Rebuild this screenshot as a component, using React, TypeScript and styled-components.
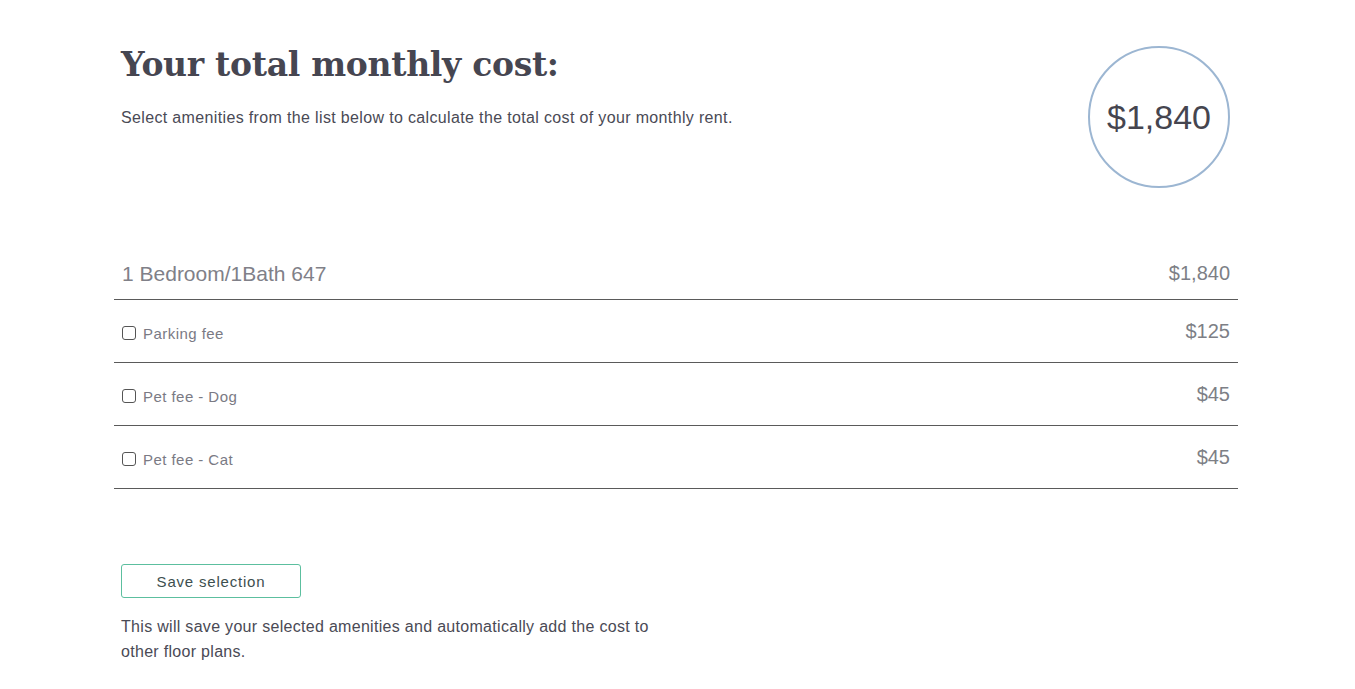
import * as React from "react";
import { FC, useState } from "react";
import styled, { createGlobalStyle } from "styled-components";

const GlobalStyle = createGlobalStyle`
  html, body {
    margin: 0;
    padding: 0;
    background: #fff;
  }
  body {
    font-family: "Liberation Sans", Arial, sans-serif;
  }
`;

const Container = styled.div`
  width: 1124px;
  margin: 0 0 0 114px;
  padding: 45px 0 30px 0;
  box-sizing: border-box;
`;

const Header = styled.div`
  display: flex;
  justify-content: space-between;
  align-items: flex-start;
  padding: 0 8px 0 7px;
`;

const HeaderLeft = styled.div`
  display: flex;
  flex-direction: column;
`;

const Title = styled.h1`
  margin: 0;
  font-family: "DejaVu Serif", "Liberation Serif", Georgia, serif;
  font-weight: bold;
  font-size: 33px;
  line-height: 40px;
  color: #464651;
  letter-spacing: -0.3px;
`;

const Lead = styled.p`
  margin: 23px 0 0 0;
  font-size: 16px;
  line-height: 20px;
  color: #4a4a55;
  letter-spacing: 0.35px;
`;

const TotalCircle = styled.div`
  width: 142px;
  height: 142px;
  border: 2px solid #9cb6d2;
  border-radius: 50%;
  box-sizing: border-box;
  display: flex;
  align-items: center;
  justify-content: center;
  font-size: 34px;
  color: #45454f;
  margin-top: 1px;
`;

const Table = styled.div`
  margin-top: 57px;
`;

const Row = styled.div<{ $head?: boolean }>`
  display: flex;
  justify-content: space-between;
  align-items: center;
  height: ${(p) => (p.$head ? "51px" : "62px")};
  border-bottom: 1px solid #5a5a5a;
  padding: ${(p) => (p.$head ? "3px 8px 0 8px" : "0 8px")};
`;

const HeadLabel = styled.span`
  font-size: 21px;
  color: #808088;
`;

const Price = styled.span`
  font-size: 20px;
  color: #7d7f86;
`;

const CheckLabel = styled.label`
  display: flex;
  align-items: center;
  gap: 7px;
  font-size: 15px;
  color: #7a7a84;
  letter-spacing: 0.45px;
  cursor: pointer;
  position: relative;
  top: 2px;
`;

const Box = styled.span<{ $on: boolean }>`
  width: 14px;
  height: 14px;
  border: 1px solid #555;
  border-radius: 3px;
  box-sizing: border-box;
  background: ${(p) => (p.$on ? "#5bbf9e" : "#fff")};
`;

const HiddenInput = styled.input`
  display: none;
`;

const Footer = styled.div`
  padding: 75px 7px 0 7px;
`;

const SaveButton = styled.button`
  width: 180px;
  height: 34px;
  border: 1px solid #5cbf9f;
  border-radius: 3px;
  background: #fff;
  font-family: "Liberation Sans", Arial, sans-serif;
  font-size: 15px;
  color: #3d4f4f;
  letter-spacing: 0.8px;
  cursor: pointer;
`;

const Note = styled.p`
  margin: 16px 0 0 0;
  max-width: 560px;
  font-size: 16px;
  line-height: 25px;
  color: #4a4a55;
  letter-spacing: 0.3px;
`;

type Amenity = {
  id: number;
  title: string;
  price: number;
};

const amenities: Amenity[] = [
  { id: 1, title: "Parking fee", price: 125 },
  { id: 2, title: "Pet fee - Dog", price: 45 },
  { id: 3, title: "Pet fee - Cat", price: 45 },
];

const BASE_RENT = 1840;

const fmt = (n: number) => "$" + n.toLocaleString("en-US");

const App: FC = () => {
  const [checked, setChecked] = useState<number[]>([]);

  const toggle = (id: number) => {
    setChecked((c) => (c.includes(id) ? c.filter((x) => x !== id) : [...c, id]));
  };

  const total =
    BASE_RENT +
    amenities
      .filter((a) => checked.includes(a.id))
      .reduce((s, a) => s + a.price, 0);

  return (
    <>
      <GlobalStyle />
      <Container>
        <Header>
          <HeaderLeft>
            <Title>Your total monthly cost:</Title>
            <Lead>
              Select amenities from the list below to calculate the total cost of
              your monthly rent.
            </Lead>
          </HeaderLeft>
          <TotalCircle>{fmt(total)}</TotalCircle>
        </Header>
        <Table>
          <Row $head>
            <HeadLabel>1 Bedroom/1Bath 647</HeadLabel>
            <Price>{fmt(BASE_RENT)}</Price>
          </Row>
          {amenities.map((a) => (
            <Row key={a.id}>
              <CheckLabel>
                <HiddenInput
                  type="checkbox"
                  checked={checked.includes(a.id)}
                  onChange={() => toggle(a.id)}
                />
                <Box $on={checked.includes(a.id)} />
                {a.title}
              </CheckLabel>
              <Price>{fmt(a.price)}</Price>
            </Row>
          ))}
        </Table>
        <Footer>
          <SaveButton>Save selection</SaveButton>
          <Note>
            This will save your selected amenities and automatically add the cost
            to other floor plans.
          </Note>
        </Footer>
      </Container>
    </>
  );
};

export default App;
